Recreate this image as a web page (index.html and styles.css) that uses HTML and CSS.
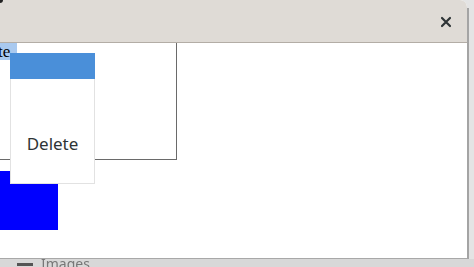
FILE: index.html
```html
<!DOCTYPE html>
<html lang="en">
<head>
  <meta charset="UTF-8">
  <title>Dialog</title>
  <link rel="stylesheet" href="styles.css">
</head>
<body>
  <div class="screen">
    <div class="window">
      <header class="headerbar">
        <span class="corner"></span>
        <button class="close-btn" aria-label="Close">
          <svg width="12" height="12" viewBox="0 0 12 12">
            <path d="M2 2 L10 10 M10 2 L2 10" stroke="#2e3436" stroke-width="2.2" stroke-linecap="round"/>
          </svg>
        </button>
      </header>
      <div class="content">
        <div class="editor">
          <span class="selection">te</span><span class="caret">.</span>
        </div>
        <div class="blue-box"></div>
        <div class="popup">
          <div class="popup-hl"></div>
          <div class="popup-item">Delete</div>
        </div>
      </div>
    </div>
    <div class="edge"></div>
  </div>
  <div class="under">
    <span class="under-icon"></span>
    <span class="under-text">Images</span>
  </div>
</body>
</html>
```

FILE: styles.css
```css
body, html {
  margin: 0;
  padding: 0;
  background-color: #e4e4e4;
  overflow: hidden;
  font-family: "Noto Sans", sans-serif;
}
.screen {
  display: flex;
  height: 259px;
}
.window {
  width: 467px;
  height: 258px;
  background: #fff;
  border-radius: 0 7px 0 0;
  border-bottom: 1px solid #a8a8a8;
  display: flex;
  flex-direction: column;
  overflow: hidden;
}
.edge {
  width: 2px;
  margin-top: 8px;
  background: #a4a4a4;
}
.headerbar {
  height: 42px;
  flex-shrink: 0;
  background-color: #dfdbd6;
  border-bottom: 1px solid #b3ada6;
  display: flex;
  justify-content: space-between;
  align-items: center;
  padding-right: 14px;
}
.corner {
  align-self: flex-start;
  width: 3px;
  height: 3px;
  border-radius: 0 0 3px 0;
  background: #222;
}
.close-btn {
  background: none;
  border: none;
  padding: 0;
  margin-top: 1px;
  width: 14px;
  height: 14px;
  display: flex;
  align-items: center;
  justify-content: center;
}
.content {
  position: relative;
  flex: 1;
}
.editor {
  width: 176px;
  height: 116px;
  margin-left: -1px;
  border: 1px solid #6a6a6a;
  border-top: none;
  font-family: "Liberation Serif", serif;
  font-size: 17px;
  line-height: 17px;
}
.selection {
  display: inline-block;
  background: #a9c9ef;
  color: #000;
  padding: 0 7px 0 0;
  margin-left: -2px;
}
.caret {
  font-size: 10px;
  vertical-align: top;
  color: #555;
  margin-left: -5px;
}
.blue-box {
  width: 58px;
  height: 59px;
  margin-top: 11px;
  background: #0000ff;
}
.popup {
  position: absolute;
  left: 10px;
  top: 10px;
  width: 83px;
  height: 130px;
  background: #fff;
  border: 1px solid #e2e2e2;
  border-top: none;
  display: flex;
  flex-direction: column;
}
.popup-hl {
  height: 26px;
  background: #4a8fd9;
  margin: 0 -1px;
}
.popup-item {
  margin-top: 53px;
  text-align: center;
  font-size: 17px;
  color: #2e3436;
}
.under {
  height: 8px;
  display: flex;
  align-items: flex-start;
  gap: 8px;
  padding-left: 17px;
  background: #d8d8d8;
  overflow: hidden;
  filter: blur(0.6px);
}
.under-icon {
  width: 16px;
  height: 3px;
  margin-top: 4px;
  background: #555;
}
.under-text {
  font-size: 14px;
  line-height: 14px;
  margin-top: -2px;
  color: #777;
}
```
